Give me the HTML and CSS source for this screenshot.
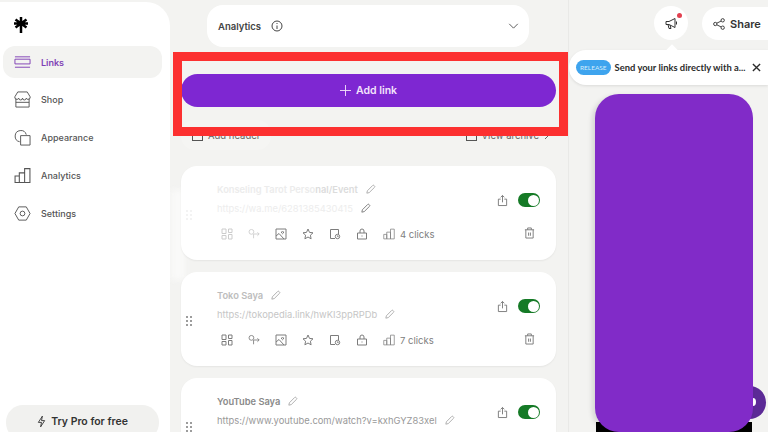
FILE: index.html
```html
<!DOCTYPE html>
<html lang="en">
<head>
    <meta charset="UTF-8">
    <meta name="viewport" content="width=device-width, initial-scale=1.0">
    <title>Links</title>
    <link rel="stylesheet" href="styles.css">
</head>
<body>
    <svg class="sprite" width="0" height="0">
        <defs>
            <symbol id="i-layout" viewBox="0 0 12 12"><path d="M1 1h4v4.500H1zM1 7.500h4V11H1zM7.500 1H11v3.500H7.500zM7.500 6.500H11V11H7.500z"/></symbol>
            <symbol id="i-redirect" viewBox="0 0 14 12"><circle cx="4" cy="3.500" r="2.800"/><path d="M7 6h6M11 4l2 2-2 2M6.500 6v5"/></symbol>
            <symbol id="i-image" viewBox="0 0 12 12"><path d="M1 1h10v10H1zM1 8l3-2.500 5 5.500M7.500 3.500a1 1 0 1 0 .1 0"/></symbol>
            <symbol id="i-star" viewBox="0 0 12 12"><path d="M6 1l1.500 3.400 3.500.4-2.600 2.400.7 3.600L6 9l-3.100 1.800.7-3.600L1 4.800l3.500-.4z"/></symbol>
            <symbol id="i-calendar" viewBox="0 0 12 12"><path d="M6 10.500H1.500v-9h8V6"/><circle cx="8.500" cy="8.500" r="2.200"/><path d="M8.500 7.500v1h1"/></symbol>
            <symbol id="i-lock" viewBox="0 0 12 12"><path d="M1.500 5h9v6h-9zM4 5V3a2 2 0 0 1 4 0v2M6 7.500v1"/></symbol>
            <symbol id="i-bars" viewBox="0 0 16 15"><path d="M1 8h4v6H1zM5 5h5v9H5zM10 1h5v13h-5z"/></symbol>
            <symbol id="i-pencil" viewBox="0 0 12 12"><path d="M2 10l.6-2.600 5.800-5.800a1 1 0 0 1 1.400 0l.6.6a1 1 0 0 1 0 1.400L4.600 9.400z"/></symbol>
            <symbol id="i-share" viewBox="0 0 12 13"><path d="M4 5H1.500v7h9V5H8M6 8.500V1M4 3l2-2 2 2"/></symbol>
            <symbol id="i-trash" viewBox="0 0 12 13"><path d="M1 3h10M4 3V1h4v2M2 3v9h8V3M5 6v3.500M7 6v3.500"/></symbol>
        </defs>
    </svg>

    <!-- Sidebar -->
    <aside class="sidebar">
        <svg class="logo" viewBox="0 0 14 16"><path d="M7 0v16M1.500 2.500l11 8M12.500 2.500l-11 8M0 6.500h14" /></svg>
        <nav class="nav">
            <a class="nav-item active">
                <svg class="nav-icon" viewBox="0 0 18 14"><path d="M1 3.500h16v5H1zM1 1h16M1 12h16"/></svg>
                Links
            </a>
            <a class="nav-item">
                <svg class="nav-icon" viewBox="0 0 18 18"><path d="M2 8v9h14V8M4 1h10l3 5a2 2 0 0 1-4 1.500A2 2 0 0 1 9 7.500a2 2 0 0 1-4 0A2 2 0 0 1 1 6zM2 12h14"/></svg>
                Shop
            </a>
            <a class="nav-item">
                <svg class="nav-icon" viewBox="0 0 18 18"><path d="M6 13.500A6 6 0 1 1 13 6M7 7h10v10H7z"/></svg>
                Appearance
            </a>
            <a class="nav-item">
                <svg class="nav-icon" viewBox="0 0 16 15"><use href="#i-bars"/></svg>
                Analytics
            </a>
            <a class="nav-item">
                <svg class="nav-icon" viewBox="0 0 18 16"><path d="M5 1h8l4 7-4 7H5L1 8z"/><circle cx="9" cy="8" r="2.500"/></svg>
                Settings
            </a>
        </nav>
        <button class="try-pro">
            <svg viewBox="0 0 10 14"><path d="M6 1L1.500 8H5l-1 5 4.500-7H5z"/></svg>
            Try Pro for free
        </button>
    </aside>

    <!-- Links column -->
    <main class="main">
        <div class="smudge"></div>

        <div class="analytics-bar">
            <span>Analytics</span>
            <svg class="info" viewBox="0 0 12 12"><circle cx="6" cy="6" r="5"/><path d="M6 5.500V9M6 3v1"/></svg>
            <svg class="chevron" viewBox="0 0 12 7"><path d="M1 1l5 5 5-5"/></svg>
        </div>

        <button class="add-link">
            <svg viewBox="0 0 12 12"><path d="M6 0v12M0 6h12"/></svg>
            Add link
        </button>
        <div class="highlight"></div>

        <div class="tools">
            <a class="tool-pill"><span class="box"></span>Add header</a>
            <a class="tool-link"><span class="box"></span>View archive <svg viewBox="0 0 6 10"><path d="M1 1l4 4-4 4"/></svg></a>
        </div>

        <div class="card">
            <div class="drag faint"></div>
            <div class="card-body">
                <div class="card-title faint-title">Konseling Tarot Perso<span class="mid">nal/Event</span><svg class="pencil"><use href="#i-pencil"/></svg></div>
                <div class="card-url faint-url">https://wa.me/6281385430415<svg class="pencil dark"><use href="#i-pencil"/></svg></div>
                <div class="card-tools">
                    <svg class="pale"><use href="#i-layout"/></svg>
                    <svg class="pale"><use href="#i-redirect"/></svg>
                    <svg><use href="#i-image"/></svg>
                    <svg><use href="#i-star"/></svg>
                    <svg><use href="#i-calendar"/></svg>
                    <svg><use href="#i-lock"/></svg>
                    <span class="clicks"><svg><use href="#i-bars"/></svg>4 clicks</span>
                </div>
            </div>
            <div class="card-actions">
                <div class="actions-top">
                    <svg class="share-icon"><use href="#i-share"/></svg>
                    <span class="toggle"></span>
                </div>
                <svg class="trash"><use href="#i-trash"/></svg>
            </div>
        </div>

        <div class="card">
            <div class="drag"></div>
            <div class="card-body">
                <div class="card-title title-two">Toko Saya<svg class="pencil"><use href="#i-pencil"/></svg></div>
                <div class="card-url url-two">https://tokopedia.link/hwKI3ppRPDb<svg class="pencil"><use href="#i-pencil"/></svg></div>
                <div class="card-tools">
                    <svg><use href="#i-layout"/></svg>
                    <svg><use href="#i-redirect"/></svg>
                    <svg><use href="#i-image"/></svg>
                    <svg><use href="#i-star"/></svg>
                    <svg><use href="#i-calendar"/></svg>
                    <svg><use href="#i-lock"/></svg>
                    <span class="clicks"><svg><use href="#i-bars"/></svg>7 clicks</span>
                </div>
            </div>
            <div class="card-actions">
                <div class="actions-top">
                    <svg class="share-icon"><use href="#i-share"/></svg>
                    <span class="toggle"></span>
                </div>
                <svg class="trash"><use href="#i-trash"/></svg>
            </div>
        </div>

        <div class="card">
            <div class="drag"></div>
            <div class="card-body">
                <div class="card-title title-three">YouTube Saya<svg class="pencil"><use href="#i-pencil"/></svg></div>
                <div class="card-url url-three">https://www.youtube.com/watch?v=kxhGYZ83xel<svg class="pencil"><use href="#i-pencil"/></svg></div>
            </div>
            <div class="card-actions">
                <div class="actions-top">
                    <svg class="share-icon"><use href="#i-share"/></svg>
                    <span class="toggle"></span>
                </div>
            </div>
        </div>
    </main>

    <!-- Preview column -->
    <section class="preview">
        <div class="preview-top">
            <button class="bell">
                <svg viewBox="0 0 13 13"><path d="M1 4.500h3L10 1.500v9L4 7.500H1zM3 7.500l1 4h2l-1-3.500M11.500 4.500v3"/></svg>
                <span class="dot"></span>
            </button>
            <button class="share">
                <svg viewBox="0 0 13 13"><circle cx="2.500" cy="6.500" r="1.800"/><circle cx="10.500" cy="2.500" r="1.800"/><circle cx="10.500" cy="10.500" r="1.800"/><path d="M4 5.700l5-2.500M4 7.300l5 2.500"/></svg>
                Share
            </button>
        </div>
        <div class="notice">
            <span class="badge">RELEASE</span>
            <span class="notice-text">Send your links directly with a...</span>
            <svg viewBox="0 0 10 10"><path d="M1 1l8 8M9 1l-8 8"/></svg>
        </div>
        <div class="phone-wrap">
            <div class="float-btn"></div>
            <div class="phone-back"></div>
            <div class="phone"></div>
        </div>
    </section>
</body>
</html>
```

FILE: styles.css
```css
/* Basic Styling */
* {
    box-sizing: border-box;
}

html {
    overflow: hidden;
}

body {
    font-family: Inter, "Liberation Sans", sans-serif;
    background-color: #f3f3f1;
    margin: 0;
    width: 768px;
    height: 432px;
    overflow: hidden;
    display: flex;
    color: #3b3b3b;
}

button {
    font-family: inherit;
    border: none;
}

svg {
    fill: none;
    stroke: currentColor;
    stroke-width: 1;
}

.sprite {
    position: absolute;
}

/* Sidebar */
.sidebar {
    width: 170px;
    flex: none;
    height: 430px;
    margin-top: 2px;
    padding: 15px 3px 0;
    background-color: white;
    border-radius: 0 24px 0 0;
    display: flex;
    flex-direction: column;
    overflow: hidden;
}

.logo {
    width: 14px;
    height: 16px;
    margin: 0 0 13px 11px;
    color: #000;
    stroke-width: 2.500;
    flex: none;
}

.nav {
    display: flex;
    flex-direction: column;
    gap: 5.750px;
    width: 159px;
}

.nav-item {
    height: 32px;
    padding-left: 11px;
    border-radius: 12px;
    display: flex;
    align-items: center;
    gap: 10px;
    font-size: 9px;
    font-weight: 500;
    color: #555;
}

.nav-item.active {
    background-color: #f3f3f1;
    color: #7f3fb5;
    font-weight: 600;
}

.nav-icon {
    width: 17px;
    height: 17px;
    flex: none;
}

.try-pro {
    margin: auto 0 -8px 3px;
    width: 153px;
    height: 35px;
    flex: none;
    border-radius: 17px;
    background-color: #f1f1ef;
    font-size: 10.500px;
    font-weight: 600;
    color: #333;
    display: flex;
    align-items: center;
    justify-content: center;
    gap: 5px;
    padding-bottom: 3px;
}

.try-pro svg {
    width: 9px;
    height: 13px;
}

/* Main column */
.main {
    position: relative;
    width: 398px;
    flex: none;
    height: 432px;
    overflow: hidden;
    padding: 5px 11px 0;
    display: flex;
    flex-direction: column;
}

.smudge {
    position: absolute;
    left: 1px;
    top: 190px;
    width: 14px;
    height: 90px;
    background-color: #fafaf9;
    filter: blur(3px);
}

.analytics-bar {
    width: 322px;
    height: 42px;
    margin-left: 26px;
    padding: 0 10px 0 11px;
    flex: none;
    background-color: white;
    border-radius: 16px;
    display: flex;
    align-items: center;
    font-size: 9.500px;
    font-weight: 600;
    color: #444;
}

.info {
    width: 12px;
    height: 12px;
    margin-left: 10px;
}

.chevron {
    width: 11px;
    height: 6px;
    margin-left: auto;
}

.add-link {
    width: 375px;
    height: 33px;
    margin-top: 27px;
    flex: none;
    border-radius: 17px;
    background-color: #7e27d2;
    color: #f3e3fb;
    font-size: 10.500px;
    font-weight: 600;
    display: flex;
    align-items: center;
    justify-content: center;
    gap: 5px;
}

.add-link svg {
    width: 11px;
    height: 11px;
}

.highlight {
    position: absolute;
    left: 3px;
    top: 52px;
    width: 395px;
    height: 84px;
    border: 9.500px solid #fc3030;
    z-index: 2;
}

.tools {
    height: 30px;
    margin-top: 13px;
    flex: none;
    display: flex;
    justify-content: space-between;
    align-items: center;
    font-size: 9.500px;
    color: #666;
}

.tool-pill,
.tool-link {
    display: flex;
    align-items: center;
    gap: 5px;
}

.tool-pill {
    padding: 0 11px;
    height: 30px;
    background-color: #f5f5f3;
    border-radius: 14px;
}

.tool-link {
    padding-right: 7px;
}

.tool-link svg {
    width: 6px;
    height: 10px;
}

.box {
    width: 11px;
    height: 11px;
    border: 1px solid #555;
}

/* Link cards */
.card {
    position: relative;
    width: 375px;
    height: 94px;
    margin-top: 12px;
    flex: none;
    background-color: white;
    border-radius: 16px;
    display: flex;
    box-shadow: 0 1px 2px rgba(0, 0, 0, 0.06);
}

.tools + .card {
    margin-top: 16px;
}

/* two columns, three rows of dots */
.drag {
    width: 6px;
    height: 11px;
    flex: none;
    margin: 43px 25px 0 5px;
    background-image: radial-gradient(circle, #9a9a9a 0.7px, transparent 1px);
    background-size: 4px 4px;
    background-position: -1px 0;
}

.drag.faint {
    opacity: 0.12;
}

.card-body {
    flex: 1;
    min-width: 0;
    padding-top: 16px;
}

.card-title {
    display: flex;
    align-items: center;
    height: 14px;
    font-size: 9.300px;
    font-weight: 600;
    white-space: nowrap;
}

.card-url {
    display: flex;
    align-items: center;
    height: 14px;
    margin-top: 5.500px;
    font-size: 9.400px;
    white-space: nowrap;
}

.pencil {
    width: 11px;
    height: 11px;
    margin-left: 7px;
    color: #aaa;
}

.pencil.dark {
    color: #777;
}

.faint-title {
    color: #ececec;
}

.faint-title .mid {
    color: #dcdcdc;
}

.faint-url {
    color: #ededed;
}

.title-two {
    color: #bdbdbd;
}

.url-two {
    color: #c6c6c6;
}

.title-three {
    color: #8a8a8a;
}

.url-three {
    color: #999;
}

.card-tools {
    display: flex;
    align-items: center;
    gap: 15px;
    margin-top: 11.500px;
    margin-left: 4px;
    height: 14px;
    color: #7c7c7c;
}

.card-tools svg {
    width: 12px;
    height: 12px;
    flex: none;
}

.card-tools .pale {
    color: #ccc;
}

.clicks {
    display: flex;
    align-items: center;
    gap: 5px;
    font-size: 9.500px;
    color: #808080;
}

.card-actions {
    width: 54px;
    flex: none;
    padding: 27px 16px 0 0;
    display: flex;
    flex-direction: column;
    align-items: flex-end;
}

.actions-top {
    display: flex;
    align-items: center;
    gap: 10px;
}

.share-icon {
    width: 11px;
    height: 13px;
    color: #777;
}

.toggle {
    position: relative;
    width: 22px;
    height: 14px;
    flex: none;
    border-radius: 7px;
    background-color: #157a26;
}

.toggle::after {
    content: "";
    position: absolute;
    right: 1.500px;
    top: 1.500px;
    width: 11px;
    height: 11px;
    border-radius: 50%;
    background-color: white;
}

.trash {
    width: 11px;
    height: 12px;
    margin: 20px 5px 0 0;
    color: #777;
}

/* Preview column */
.preview {
    position: relative;
    flex: 1;
    min-width: 0;
    height: 432px;
    overflow: hidden;
    border-left: 1px solid #e9e9e7;
    display: flex;
    flex-direction: column;
}

.preview-top {
    height: 50px;
    flex: none;
    padding-top: 6px;
    display: flex;
    justify-content: flex-end;
    gap: 14px;
}

.bell {
    position: relative;
    width: 34px;
    height: 34px;
    border-radius: 50%;
    background-color: white;
    color: #333;
    padding: 0;
    display: flex;
    align-items: center;
    justify-content: center;
}

.bell svg {
    width: 13px;
    height: 13px;
}

.dot {
    position: absolute;
    top: 7px;
    right: 6px;
    width: 5px;
    height: 5px;
    border-radius: 50%;
    background-color: #e2404f;
}

.share {
    width: 66px;
    height: 33px;
    margin-top: 1px;
    padding: 0 0 0 11px;
    border-radius: 17px 0 0 17px;
    background-color: white;
    color: #333;
    font-size: 11px;
    font-weight: 600;
    display: flex;
    align-items: center;
    gap: 5px;
}

.share svg {
    width: 12px;
    height: 12px;
}

.notice {
    position: relative;
    z-index: 3;
    height: 35px;
    flex: none;
    padding: 0 5px 0 7px;
    background-color: white;
    border-radius: 17px 0 0 17px;
    box-shadow: 0 1px 3px rgba(0, 0, 0, 0.1);
    display: flex;
    align-items: center;
    gap: 4px;
    font-family: Lato, "Liberation Sans", sans-serif;
    font-size: 9.400px;
    font-weight: 700;
    color: #2b2b2b;
    white-space: nowrap;
}

.notice::before {
    content: "";
    position: absolute;
    left: 99px;
    top: -4px;
    width: 8px;
    height: 8px;
    background-color: white;
    transform: rotate(45deg);
}

.badge {
    padding: 0 4px;
    height: 15px;
    line-height: 15px;
    border-radius: 8px;
    background-color: #3ea4ee;
    color: #d5ecfb;
    font-size: 6.500px;
    font-weight: 400;
}

.notice svg {
    width: 9px;
    height: 9px;
    margin-left: 2.500px;
    stroke-width: 1.500;
    flex: none;
}

.phone-wrap {
    position: relative;
    flex: 1;
    margin-top: 9px;
}

.phone {
    position: absolute;
    left: 26px;
    top: 0;
    width: 158px;
    height: 338px;
    background-color: #812bc8;
    border-radius: 24px;
    box-shadow: -3px 2px 5px rgba(0, 0, 0, 0.12);
}

.phone-back {
    position: absolute;
    left: 27px;
    top: 328px;
    width: 156px;
    height: 10px;
    background-color: #000;
}

.float-btn {
    position: absolute;
    left: 164px;
    top: 292px;
    width: 33px;
    height: 33px;
    border-radius: 50%;
    background-color: #5c2a96;
}

.float-btn::after {
    content: "";
    position: absolute;
    left: 17px;
    top: 12px;
    width: 6px;
    height: 8px;
    border-radius: 50%;
    background-color: white;
}
```
